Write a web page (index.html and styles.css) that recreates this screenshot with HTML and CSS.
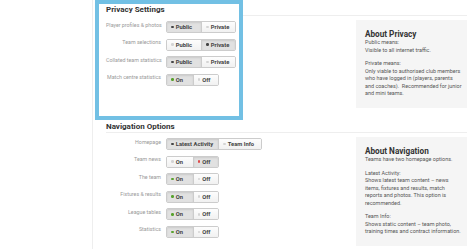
FILE: index.html
```html
<!DOCTYPE html>
<html lang="en">
<head>
    <meta charset="UTF-8">
    <meta name="viewport" content="width=device-width, initial-scale=1.0">
    <title>Team settings</title>
    <link rel="stylesheet" href="styles.css">
</head>
<body>
    <!-- tutorial highlight round the privacy form -->
    <div class="highlight"></div>

    <div class="main">
        <section class="section">
            <h2 class="section-title"><span>Privacy Settings</span></h2>
            <div class="section-body">
                <div class="fields">
                    <div class="field">
                        <label class="field-label">Player profiles &amp; photos</label>
                        <div class="toggle toggle--pp">
                            <span class="opt is-on"><i class="dot"></i>Public</span>
                            <span class="opt"><i class="dot"></i>Private</span>
                        </div>
                    </div>
                    <div class="field">
                        <label class="field-label">Team selections</label>
                        <div class="toggle toggle--pp">
                            <span class="opt"><i class="dot"></i>Public</span>
                            <span class="opt is-on"><i class="dot"></i>Private</span>
                        </div>
                    </div>
                    <div class="field">
                        <label class="field-label">Collated team statistics</label>
                        <div class="toggle toggle--pp">
                            <span class="opt is-on"><i class="dot"></i>Public</span>
                            <span class="opt"><i class="dot"></i>Private</span>
                        </div>
                    </div>
                    <div class="field">
                        <label class="field-label">Match centre statistics</label>
                        <div class="toggle toggle--switch">
                            <span class="opt is-on opt--green"><i class="dot"></i>On</span>
                            <span class="opt"><i class="dot"></i>Off</span>
                        </div>
                    </div>
                </div>

                <aside class="help">
                    <h3>About Privacy</h3>
                    <p>Public means:<br>Visible to all internet traffic.</p>
                    <p>Private means:<br>Only viable to authorised club members<br>who have logged in (players, parents<br>and coaches).&nbsp; Recommended for junior<br>and mini teams.</p>
                </aside>
            </div>
        </section>

        <section class="section">
            <h2 class="section-title"><span>Navigation Options</span></h2>
            <div class="section-body">
                <div class="fields">
                    <div class="field">
                        <label class="field-label">Homepage</label>
                        <div class="toggle toggle--home">
                            <span class="opt is-on"><i class="dot"></i>Latest Activity</span>
                            <span class="opt"><i class="dot"></i>Team Info</span>
                        </div>
                    </div>
                    <div class="field">
                        <label class="field-label">Team news</label>
                        <div class="toggle toggle--switch">
                            <span class="opt"><i class="dot"></i>On</span>
                            <span class="opt is-on opt--red"><i class="dot"></i>Off</span>
                        </div>
                    </div>
                    <div class="field">
                        <label class="field-label">The team</label>
                        <div class="toggle toggle--switch">
                            <span class="opt is-on opt--green"><i class="dot"></i>On</span>
                            <span class="opt"><i class="dot"></i>Off</span>
                        </div>
                    </div>
                    <div class="field">
                        <label class="field-label">Fixtures &amp; results</label>
                        <div class="toggle toggle--switch">
                            <span class="opt is-on opt--green"><i class="dot"></i>On</span>
                            <span class="opt"><i class="dot"></i>Off</span>
                        </div>
                    </div>
                    <div class="field">
                        <label class="field-label">League tables</label>
                        <div class="toggle toggle--switch">
                            <span class="opt is-on opt--green"><i class="dot"></i>On</span>
                            <span class="opt"><i class="dot"></i>Off</span>
                        </div>
                    </div>
                    <div class="field">
                        <label class="field-label">Statistics</label>
                        <div class="toggle toggle--switch">
                            <span class="opt is-on opt--green"><i class="dot"></i>On</span>
                            <span class="opt"><i class="dot"></i>Off</span>
                        </div>
                    </div>
                </div>

                <aside class="help">
                    <h3>About Navigation</h3>
                    <p>Teams have two homepage options.</p>
                    <p>Latest Activity:<br>Shows latest team content &ndash; news<br>items, fixtures and results, match<br>reports and photos. This option is<br>recommended.</p>
                    <p>Team Info:<br>Shows static content &ndash; team photo,<br>training times and contract information.</p>
                </aside>
            </div>
        </section>
    </div>
</body>
</html>
```

FILE: styles.css
```css
/* Basis */
body {
    margin: 0;
    font-family: Roboto, 'Liberation Sans', sans-serif;
    color: #333;
    background-color: #fff;
}

/* Blue tutorial frame, sits over the privacy form */
.highlight {
    position: absolute;
    top: 0;
    left: 95px;
    width: 148px;
    height: 120px;
    box-sizing: border-box;
    border: 4px solid #72c0e4;
    background-color: #fff;
    z-index: 1;
}

.main {
    margin: 0 7px 0 92px;
    padding-left: 13px;
    border-left: 1px solid #eee;
    min-height: 249px;
}

/* Sections */
.section + .section {
    margin-top: 9.5px;
}

.section-title {
    margin: 0;
    padding-top: 4px;
    font-size: 8px;
    line-height: 11px;
    font-weight: 700;
    color: #333;
    border-bottom: 1px solid #eee;
}

.section-title span {
    position: relative;
    z-index: 2;
}

.section-body {
    display: flex;
    align-items: flex-start;
}

/* Form rows */
.fields {
    position: relative;
    z-index: 2;
    display: flex;
    flex-direction: column;
    gap: 5.6px;
    padding-top: 5px;
}

.field {
    display: flex;
    gap: 5px;
}

.field-label {
    width: 55px;
    padding-top: 0.5px;
    text-align: right;
    white-space: nowrap;
    font-size: 5.3px;
    line-height: 7px;
    color: #999;
}

/* Segmented toggles */
.toggle {
    display: flex;
    height: 12px;
    box-sizing: border-box;
    border: 1px solid #ccc;
    border-radius: 2px;
    overflow: hidden;
}

.opt {
    display: flex;
    align-items: center;
    box-sizing: border-box;
    padding-left: 4px;
    font-size: 5.8px;
    font-weight: 700;
    color: #444;
    white-space: nowrap;
    background: linear-gradient(#fdfdfd, #f1f1f1);
}

.opt + .opt {
    border-left: 1px solid #ccc;
}

.opt.is-on {
    background: #e1e1e1;
    box-shadow: inset 0 1px 2px rgba(0, 0, 0, 0.1);
}

.dot {
    width: 2.6px;
    height: 2.6px;
    margin-right: 2.2px;
    border-radius: 50%;
    background-color: #d4d4d4;
}

.is-on .dot {
    background-color: #444;
}

.opt--green .dot {
    background-color: #58a22d;
}

.opt--red .dot {
    background-color: #dc4a4a;
}

.toggle--pp .opt {
    width: 34px;
}

.toggle--switch .opt {
    width: 25.5px;
}

.toggle--home .opt:first-child {
    width: 51px;
}

.toggle--home .opt:last-child {
    width: 43px;
}

/* Help boxes on the right */
.help {
    margin-left: auto;
    margin-top: 4px;
    width: 111px;
    box-sizing: border-box;
    padding: 10px 4px 10px 9px;
    background-color: #f5f5f5;
    font-size: 5.45px;
    line-height: 7.5px;
    color: #555;
    white-space: nowrap;
}

.help h3 {
    margin: 0;
    font-size: 8.2px;
    line-height: 9px;
    font-weight: 700;
    color: #333;
}

.help p {
    margin: 6px 0 0;
}

.help h3 + p {
    margin-top: 0;
}
```
